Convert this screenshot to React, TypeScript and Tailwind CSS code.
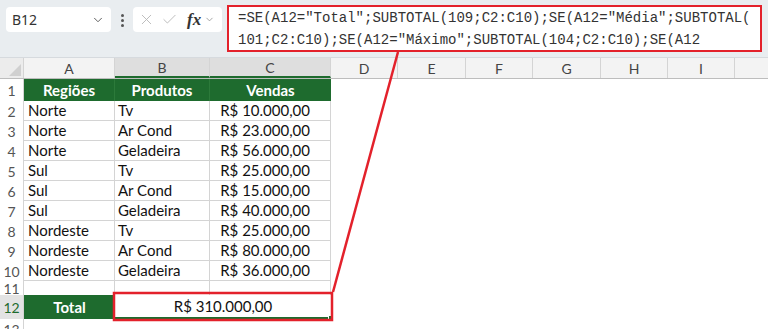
import { ChevronDown, X, Check } from "lucide-react";

const cellFont = { fontFamily: "Lato, 'Open Sans', sans-serif" };

const rows: [string, string, string][] = [
  ["Norte", "Tv", "R$ 10.000,00"],
  ["Norte", "Ar Cond", "R$ 23.000,00"],
  ["Norte", "Geladeira", "R$ 56.000,00"],
  ["Sul", "Tv", "R$ 25.000,00"],
  ["Sul", "Ar Cond", "R$ 15.000,00"],
  ["Sul", "Geladeira", "R$ 40.000,00"],
  ["Nordeste", "Tv", "R$ 25.000,00"],
  ["Nordeste", "Ar Cond", "R$ 80.000,00"],
  ["Nordeste", "Geladeira", "R$ 36.000,00"],
];

const extraCols = [
  { label: "D", w: "w-[67px]" },
  { label: "E", w: "w-[68px]" },
  { label: "F", w: "w-[67px]" },
  { label: "G", w: "w-[68px]" },
  { label: "H", w: "w-[67px]" },
  { label: "I", w: "w-[67px]" },
  { label: "", w: "w-[68px]" },
];

function RowHead({ n, h, active }: { n: string; h: string; active?: boolean }) {
  return (
    <div
      className={`${h} w-[24px] shrink-0 flex items-center justify-center overflow-hidden border-r border-[#d4d4d4] text-[14px] ${
        active ? "bg-[#e3e3e3] text-[#1e6b2e]" : "bg-white text-[#555]"
      }`}
    >
      {n}
    </div>
  );
}

function FormulaBar() {
  return (
    <div className="flex h-[58px] items-start gap-0 border-b border-[#d6dade] bg-[#e9edf0] pl-[6px] pt-[5px]">
      {/* Name box */}
      <div className="mt-[2px] flex h-[25px] w-[105px] items-center justify-between rounded-[4px] bg-white pl-[6px] pr-[6px] text-[14px] text-[#333]" style={{ fontFamily: "'Noto Sans', sans-serif" }}>
        <span>B12</span>
        <ChevronDown className="h-[14px] w-[14px] text-[#555]" strokeWidth={1.6} />
      </div>
      <div className="mt-[9px] flex w-[22px] flex-col items-center gap-[2px]">
        <span className="h-[3px] w-[3px] rounded-full bg-[#555]" />
        <span className="h-[3px] w-[3px] rounded-full bg-[#555]" />
        <span className="h-[3px] w-[3px] rounded-full bg-[#555]" />
      </div>
      {/* fx box */}
      <div className="mt-[2px] flex h-[25px] w-[89px] items-center rounded-[4px] bg-white pl-[5px]">
        <X className="h-[17px] w-[17px] text-[#b8b8b8]" strokeWidth={1.3} />
        <Check className="ml-[6px] h-[17px] w-[17px] text-[#b8b8b8]" strokeWidth={1.3} />
        <span className="ml-[9px] text-[17px] font-bold italic text-[#333]" style={{ fontFamily: "'Liberation Serif', serif" }}>
          fx
        </span>
        <ChevronDown className="ml-[3px] h-[11px] w-[11px] text-[#888]" strokeWidth={1.6} />
      </div>
      {/* formula */}
      <div
        className="ml-[5px] h-[47px] w-[535px] border-2 border-[#e3212b] bg-white px-[9px] text-[14px] leading-[22px] text-[#333]"
        style={{ fontFamily: "'Liberation Mono', monospace" }}
      >
        <div className="whitespace-pre">=SE(A12="Total";SUBTOTAL(109;C2:C10);SE(A12="Média";SUBTOTAL(</div>
        <div className="whitespace-pre">101;C2:C10);SE(A12="Máximo";SUBTOTAL(104;C2:C10);SE(A12</div>
      </div>
    </div>
  );
}

function ColumnHeaders() {
  const base = "h-[20px] shrink-0 flex items-center justify-center border-r border-[#d4d4d4] text-[14px] text-[#444]";
  return (
    <div className="flex border-b border-[#bdbdbd] bg-[#f3f3f3]" style={cellFont}>
      <div className="relative h-[20px] w-[24px] shrink-0 border-r border-[#d4d4d4] bg-[#ececec]">
        <div className="absolute bottom-[2px] right-[2px] h-0 w-0 border-b-[12px] border-l-[12px] border-b-[#d0d0d0] border-l-transparent" />
      </div>
      <div className={`${base} w-[91px]`}>A</div>
      <div className={`${base} w-[95px] border-b-2 border-b-[#1e6b2e] bg-[#dedede] text-[#1e6b2e]`}>B</div>
      <div className={`${base} w-[121px] border-b-2 border-b-[#1e6b2e] bg-[#dedede] text-[#1e6b2e]`}>C</div>
      {extraCols.map((c, i) => (
        <div key={i} className={`${base} ${c.w}`}>
          {c.label}
        </div>
      ))}
    </div>
  );
}

export default function App() {
  const cell = "shrink-0 flex items-center border-r border-b border-[#d4d4d4] text-[15px] text-[#111]";
  return (
    <div className="relative h-[329px] w-[768px] overflow-hidden bg-white">
      <FormulaBar />
      <ColumnHeaders />
      <div style={cellFont}>
        {/* Row 1 - table header */}
        <div className="flex">
          <RowHead n="1" h="h-[22px]" />
          <div className="flex h-[22px] w-[91px] shrink-0 items-center justify-center border-r border-[#2c7a3a] bg-[#1e6b2e] text-[15px] font-bold text-white">Regiões</div>
          <div className="flex h-[22px] w-[95px] shrink-0 items-center justify-center border-r border-[#2c7a3a] bg-[#1e6b2e] text-[15px] font-bold text-white">Produtos</div>
          <div className="flex h-[22px] w-[121px] shrink-0 items-center justify-center bg-[#1e6b2e] text-[15px] font-bold text-white">Vendas</div>
        </div>
        {rows.map((r, i) => (
          <div key={i} className="flex">
            <RowHead n={String(i + 2)} h="h-[20px]" />
            <div className={`${cell} h-[20px] w-[91px] pl-[4px]`}>{r[0]}</div>
            <div className={`${cell} h-[20px] w-[95px] pl-[3px]`}>{r[1]}</div>
            <div className={`${cell} h-[20px] w-[121px] justify-end pr-[20px]`}>{r[2]}</div>
          </div>
        ))}
        {/* Row 11 */}
        <div className="flex">
          <RowHead n="11" h="h-[14px]" />
          <div className={`${cell} h-[14px] w-[91px] border-b-0`} />
          <div className={`${cell} h-[14px] w-[95px] border-b-0`} />
          <div className={`${cell} h-[14px] w-[121px] border-b-0`} />
        </div>
        {/* Row 12 - total */}
        <div className="flex">
          <RowHead n="12" h="h-[24px]" active />
          <div className="flex h-[24px] w-[91px] shrink-0 items-center justify-center bg-[#1e6b2e] text-[15px] font-bold text-white">Total</div>
          <div className="relative flex h-[24px] w-[216px] shrink-0 items-center justify-center border-b-2 border-[#1e6b2e] bg-white text-[15px] text-[#111]">
            R$ 310.000,00
            <span className="absolute -bottom-[3px] -right-[2px] h-[5px] w-[5px] border border-white bg-[#1e6b2e]" />
          </div>
        </div>
        {/* Row 13 */}
        <div className="flex">
          <RowHead n="13" h="h-[20px]" />
        </div>
      </div>

      {/* callout annotation */}
      <svg className="pointer-events-none absolute left-0 top-0" width="768" height="329">
        <line x1="398" y1="52" x2="333" y2="292" stroke="#e3212b" strokeWidth="2.5" />
        <rect x="114" y="293" width="218" height="27" fill="none" stroke="#e3212b" strokeWidth="2.5" />
      </svg>
    </div>
  );
}
